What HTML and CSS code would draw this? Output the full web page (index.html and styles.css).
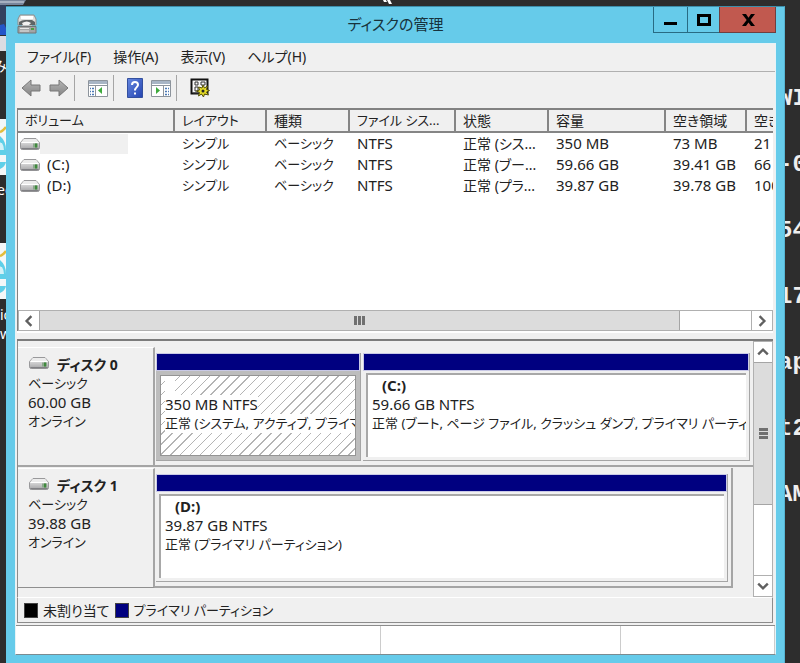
FILE: index.html
```html
<!DOCTYPE html>
<html lang="ja">
<head>
<meta charset="utf-8">
<meta name="viewport" content="width=device-width, initial-scale=1">
<title>ディスクの管理</title>
<link rel="stylesheet" href="styles.css">
</head>
<body>
<svg class="symbols" aria-hidden="true">
  <defs>
    <linearGradient id="metal" x1="0" y1="0" x2="0" y2="1"><stop offset="0" stop-color="#f4f4f4"/><stop offset="1" stop-color="#a4a4a6"/></linearGradient>
    <linearGradient id="arrow" x1="0" y1="0" x2="0" y2="1"><stop offset="0" stop-color="#b4b4b4"/><stop offset="1" stop-color="#858585"/></linearGradient>
    <linearGradient id="help" x1="0" y1="0" x2="1" y2="1"><stop offset="0" stop-color="#6688e0"/><stop offset="1" stop-color="#2444b0"/></linearGradient>
  </defs>
  <symbol id="drive" viewBox="0 0 20 12">
    <path d="M4 .5h12l3.500 4v5.300q0 1.700-2 1.700h-15q-2 0-2-1.700v-5.300z" fill="url(#metal)" stroke="#99999b"/>
    <path d="M4 1h12l3 3.500h-18z" fill="#ececec"/>
    <path d="M1.500 4.500h17" stroke="#fff"/>
    <path d="M1.500 10.700h17" stroke="#77777b"/>
    <path d="M13 5.500h5v4h-5z" fill="#8aa88a"/><path d="M15 5.500h2v4h-2z" fill="#3f8a3d"/>
  </symbol>
  <symbol id="ie" viewBox="0 0 6 56">
    <path d="M0 0h6v56H0z" fill="#f4f7f8"/>
    <path d="M0 13q3-1 6-5" fill="none" stroke="#e3bd3c" stroke-width="2.500"/>
    <path d="M0 17q6 5 6 14v5H0v-5h2q0-6-2-8zM0 43h6q-1 5-6 7z" fill="#5fcfe8"/>
    <path d="M0 24h2q2 3 2 7H0z" fill="#d4f1f7"/>
  </symbol>
</svg>

<div class="desktop">
  <div class="shortcuts">
    <svg class="pc" viewBox="0 0 26 52"><path d="M0 0h26l-3 5H0z" fill="#77859c"/><path d="M0 2h24" stroke="#d7dce4"/><path d="M0 5h6v30H0z" fill="#33415f"/><path d="M0 25l4-1 2 4v7H0z" fill="#2456c8"/><path d="M0 36h6v15H0z" fill="#dadce2"/></svg>
    <span class="caption caption-a">み</span>
    <svg class="ie ie-a"><use href="#ie"/></svg>
    <span class="caption caption-b">ee</span>
    <svg class="ie ie-b"><use href="#ie"/></svg>
    <span class="caption caption-c">ic<br>w</span>
    <svg class="pointer" viewBox="0 0 10 4"><path d="M1 0h3l1 2h-3zM5 0h3l2 4h-3z" fill="#fff"/></svg>
  </div>

  <main class="window">
    <header class="titlebar">
      <svg class="app-icon" viewBox="0 0 20 20"><path d="M3 1h14l2 4v6H1V5z" fill="#dededc" stroke="#8c8c8c"/><path d="M4 2h12v3H4z" fill="#fff"/><path d="M2 8q3-2 6-2h7l3 2v3H2z" fill="#5f6466"/><path d="M5 9q5-3 9 0l-2 2H6z" fill="#f1f1f1"/><path d="M5 11h10v2H5z" fill="#b9bcbd"/><path d="M1 12.500h18v6.500H1z" fill="#a3a5a6" stroke="#727476"/><path d="M3 14.500h9M3 17h9" stroke="#e5e5e5"/><path d="M14 14h3v2h-3z" fill="#4d9b43"/></svg>
      <h1>ディスクの管理</h1>
      <div class="controls">
        <button class="minimize" aria-label="最小化"><svg viewBox="0 0 14 12"><path d="M0 8h13v3H0z"/></svg></button>
        <button class="maximize" aria-label="最大化"><svg viewBox="0 0 14 12"><path d="M0 0h14v12H0zM3 3v6h8V3z" fill-rule="evenodd"/></svg></button>
        <button class="close" aria-label="閉じる"><svg viewBox="0 0 14 12"><path d="M1 0h4l2.500 3.700L10 0h4L9.300 6 14 12h-4L7.500 8.400 5 12H1l4.700-6z"/></svg></button>
      </div>
    </header>

    <div class="client">
      <nav class="menu">
        <button>ファイル(F)</button><button>操作(A)</button><button>表示(V)</button><button>ヘルプ(H)</button>
      </nav>
      <div class="toolbar">
        <button aria-label="戻る"><svg viewBox="0 0 20 18"><path d="M1 9l9-8v5h9v6h-9v5z" fill="url(#arrow)" stroke="#777"/></svg></button>
        <button aria-label="進む"><svg viewBox="0 0 20 18"><path d="M19 9l-9-8v5H1v6h9v5z" fill="url(#arrow)" stroke="#777"/></svg></button>
        <i class="divider"></i>
        <button class="spaced" aria-label="コンソール ツリー"><svg viewBox="0 0 20 18"><path d="M.5 1.500h19v16H.5z" fill="#fff" stroke="#8d949c"/><path d="M1 2h18v3H1z" fill="#a8b5c5"/><path d="M1 6.500h18" stroke="#8d949c"/><path d="M7.500 7v10" stroke="#8d949c"/><path d="M2 9.500h4M2 12.500h4M2 15.500h4" stroke="#4a78b5" stroke-width="1.500" stroke-dasharray="1 1 2"/><path d="M14 8v7l-4-3.500z" fill="#3eaa3c"/></svg></button>
        <i class="divider"></i>
        <button class="spaced help" aria-label="ヘルプ"><svg viewBox="0 0 16 20"><path d="M.5.5h15v19H.5z" fill="url(#help)" stroke="#34509f"/><path d="M5 7q0-3 3-3t3 3c0 2-3 2.500-3 5.500" fill="none" stroke="#fff" stroke-width="2"/><path d="M7 14.500h2v2H7z" fill="#fff"/></svg></button>
        <button aria-label="操作ウィンドウ"><svg viewBox="0 0 20 18"><path d="M.5 1.500h19v16H.5z" fill="#fff" stroke="#8d949c"/><path d="M1 2h18v3H1z" fill="#a8b5c5"/><path d="M1 6.500h18" stroke="#8d949c"/><path d="M12.500 7v10" stroke="#8d949c"/><path d="M14 9.500h4M14 12.500h4M14 15.500h4" stroke="#4a78b5" stroke-width="1.500" stroke-dasharray="2 1 1"/><path d="M5 8v7l4-3.500z" fill="#3eaa3c"/></svg></button>
        <i class="divider"></i>
        <button class="spaced" aria-label="設定"><svg viewBox="0 0 20 20"><path d="M1.500 1.500h16v14h-16z" fill="#f8f8f8" stroke="#111" stroke-width="2"/><path d="M5 4h3v3H5zM11 4h4v3h-4zM5 9h3v4H5zM3 15h9" fill="none" stroke="#333"/><path d="M13 7l1.500 3 3-2-1 3.500 3 1-3 1.500 2 3-4-1-1 3-2-3-3 2 1-3.500-3-1.500 3-1-1-3 3.500 1z" fill="#e5dc25" stroke="#55500a"/><circle cx="13" cy="13" r="1.500" fill="#222"/></svg></button>
      </div>

      <section class="volumes">
        <div class="volume-view">
        <table>
          <colgroup><col class="c-name"><col class="c-layout"><col class="c-type"><col class="c-fs"><col class="c-state"><col class="c-size"><col class="c-free"><col></colgroup>
          <thead><tr><th class="kana">ボリューム</th><th class="kana">レイアウト</th><th>種類</th><th class="kana">ファイル シス...</th><th>状態</th><th>容量</th><th>空き領域</th><th>空き領域の割合</th></tr></thead>
          <tbody>
            <tr><td><span class="name"><svg><use href="#drive"/></svg><span class="unnamed"></span></span></td><td class="kana">シンプル</td><td class="kana">ベーシック</td><td class="num">NTFS</td><td>正常 (シス...</td><td class="num">350 MB</td><td class="num">73 MB</td><td class="num">21 %</td></tr>
            <tr><td><span class="name"><svg><use href="#drive"/></svg><span class="num">(C:)</span></span></td><td class="kana">シンプル</td><td class="kana">ベーシック</td><td class="num">NTFS</td><td>正常 (ブー...</td><td class="num">59.66 GB</td><td class="num">39.41 GB</td><td class="num">66 %</td></tr>
            <tr><td><span class="name"><svg><use href="#drive"/></svg><span class="num">(D:)</span></span></td><td class="kana">シンプル</td><td class="kana">ベーシック</td><td class="num">NTFS</td><td>正常 (プラ...</td><td class="num">39.87 GB</td><td class="num">39.78 GB</td><td class="num">100 %</td></tr>
          </tbody>
        </table>
        </div>
        <div class="hscroll">
          <button aria-label="左へ"><svg viewBox="0 0 10 10"><path d="M7 1L3 5l4 4"/></svg></button>
          <div class="track"><div class="thumb"><i></i><i></i><i></i></div></div>
          <button aria-label="右へ"><svg viewBox="0 0 10 10"><path d="M3 1l4 4-4 4"/></svg></button>
        </div>
      </section>

      <div class="splitter"></div>

      <section class="disks">
        <div class="disk-list">
          <article class="disk">
            <div class="disk-label">
              <h2><svg><use href="#drive"/></svg>ディスク 0</h2>
              <p class="kana">ベーシック</p><p class="num">60.00 GB</p><p class="kana">オンライン</p>
            </div>
            <div class="partitions">
              <div class="partition system selected">
                <div class="bar"></div>
                <div class="frame"><div class="body"><p><b class="blank"></b></p><p class="num"><span>350 MB NTFS</span></p><p class="kana"><span>正常 (システム, アクティブ, プライマリ パーティション)</span></p></div></div>
              </div>
              <div class="partition">
                <div class="bar"></div>
                <div class="frame"><div class="body"><p class="letter">(C:)</p><p class="num">59.66 GB NTFS</p><p class="kana">正常 (ブート, ページ ファイル, クラッシュ ダンプ, プライマリ パーティション)</p></div></div>
              </div>
            </div>
          </article>
          <article class="disk short">
            <div class="disk-label">
              <h2><svg><use href="#drive"/></svg>ディスク 1</h2>
              <p class="kana">ベーシック</p><p class="num">39.88 GB</p><p class="kana">オンライン</p>
            </div>
            <div class="partitions">
              <div class="partition">
                <div class="bar"></div>
                <div class="frame"><div class="body"><p class="letter">(D:)</p><p class="num">39.87 GB NTFS</p><p class="kana">正常 (プライマリ パーティション)</p></div></div>
              </div>
            </div>
          </article>
        </div>
        <div class="vscroll">
          <button aria-label="上へ"><svg viewBox="0 0 10 10"><path d="M1 7l4-4 4 4"/></svg></button>
          <div class="track"><div class="thumb"><i></i><i></i><i></i></div></div>
          <button aria-label="下へ"><svg viewBox="0 0 10 10"><path d="M1 3l4 4 4-4"/></svg></button>
        </div>
      </section>

      <div class="legend"><span class="swatch free"></span><span>未割り当て</span><span class="swatch primary"></span><span class="kana">プライマリ パーティション</span></div>
      <footer class="status"><span></span><span></span><span></span></footer>
    </div>
  </main>

  <aside class="backdrop">
    <span>WI</span><span>-0</span><span>54</span><span>17</span><span>ap</span><span>t2</span><span>AM</span>
  </aside>
</div>
</body>
</html>
```
FILE: styles.css
```css
* { box-sizing: border-box; }

body {
  margin: 0;
  background: #2d2d2d;
  color: #222;
  font: 14px/19px "Noto Sans", "Noto Sans CJK JP", sans-serif;
  font-feature-settings: "palt";
}

h1, h2, p { margin: 0; font-weight: 400; }
button { padding: 0; border: 0; background: none; color: inherit; font: inherit; font-feature-settings: inherit; }
svg { display: block; }
.symbols { position: absolute; width: 0; height: 0; }
.num { font-size: 15px; }
.kana { font-size: 13px; }

/* Desktop */
.desktop {
  display: grid;
  grid-template-columns: 6px minmax(0, 1fr) 15px;
  min-height: 100vh;
}
.shortcuts { position: relative; color: #fff; }
.pc { position: absolute; left: 0; top: 0; width: 26px; height: 52px; }
.ie { position: absolute; left: 0; width: 6px; height: 56px; }
.ie-a { top: 119px; }
.ie-b { top: 243px; }
.caption { position: absolute; left: 0; white-space: nowrap; }
.caption-a { left: -7px; top: 56px; }
.caption-b { left: -3px; top: 180px; }
.caption-c { top: 305px; }
.pointer { position: absolute; left: 382px; top: 0; width: 10px; height: 4px; }

.backdrop {
  display: flex;
  flex-direction: column;
  padding-top: 66px;
  overflow: hidden;
  color: #eee;
  font: 700 24px/66px "Liberation Mono", monospace;
}
.backdrop span { margin-left: -7px; }

/* Window */
.window {
  position: relative;
  display: flex;
  flex-direction: column;
  margin-top: 6px;
  padding: 0 8px 8px 9px;
  background: #66cbea;
  border-top: 1px solid #3d8eaa;
  border-right: 1px solid #55b4d2;
}
.titlebar {
  display: grid;
  grid-template-columns: 1fr auto 1fr;
  align-items: start;
  height: 36px;
}
.app-icon { width: 20px; height: 20px; margin: 7px 2px; }
.titlebar h1 { padding-top: 8px; font-size: 15px; color: #17323c; }
.controls { display: flex; justify-content: flex-end; }
.controls button {
  display: grid;
  place-items: center;
  height: 26px;
  border: 1px solid #286b83;
  border-top: 0;
  border-right: 0;
}
.controls svg { width: 14px; height: 12px; }
.controls .minimize { width: 34px; }
.controls .maximize { width: 32px; }
.controls .close { width: 57px; background: #c1594f; border-color: #6f3f40; border-right: 1px solid #6f3f40; }

.client {
  flex: 1;
  display: flex;
  flex-direction: column;
  background: #f0f0f0;
  border: 1px solid #e6f3f7;
  border-bottom-color: #7b8b90;
}
.menu {
  display: flex;
  gap: 22px;
  height: 28px;
  padding: 0 11px 2px;
  border-bottom: 1px solid #b0b0b0;
}
.toolbar { display: flex; align-items: center; gap: 8px; height: 36px; padding: 0 5px 5px; }
.toolbar svg { width: 20px; height: 20px; }
.toolbar .help svg { width: 16px; }
.divider { width: 1px; height: 26px; margin: 0 -3px; background: #a5a5a5; }
.toolbar .spaced { margin-left: 8px; }

/* Volume list */
.volumes {
  flex: 1 0 220px;
  display: flex;
  flex-direction: column;
  margin: 0 2px 0 1px;
  background: #fff;
  border-top: 2px solid #828282;
  border-left: 1px solid #828282;
}
.volume-view { flex: 1; overflow: hidden; }
table { width: 100%; table-layout: fixed; border-collapse: separate; border-spacing: 0; }
.c-name { width: 157px; }
.c-layout { width: 92px; }
.c-type { width: 83px; }
.c-fs { width: 106px; }
.c-state { width: 93px; }
.c-size { width: 117px; }
.c-free { width: 81px; }
th, td { padding: 0 0 0 7px; overflow: hidden; white-space: nowrap; text-align: left; font-weight: 400; }
th {
  height: 23px;
  background: #f0f0f0;
  border-right: 2px solid #858585;
  border-bottom: 2px solid #858585;
}
th:last-child { border-right: 0; }
td { height: 21px; }
td:first-child { padding-left: 2px; }
.name { display: flex; align-items: center; height: 21px; }
.name svg { width: 20px; height: 12px; }
.name .num { margin-left: 7px; }
.unnamed { width: 88px; height: 20px; background: #f0f0f0; }

/* Scroll bars */
.hscroll, .vscroll { display: flex; background: #fff; border: 1px solid #b0b0b0; }
.hscroll { height: 21px; }
.vscroll { flex: none; flex-direction: column; width: 20px; }
.hscroll button, .vscroll button { display: grid; place-items: center; flex: none; }
.hscroll button { width: 20px; }
.vscroll button { height: 20px; }
.hscroll button svg, .vscroll button svg { width: 12px; height: 12px; fill: none; stroke: #606060; stroke-width: 2; }
.track { flex: 1; display: flex; }
.thumb { display: flex; align-items: center; justify-content: center; gap: 1px; background: #dcdcdc; }
.hscroll .track { border-right: 1px solid #b0b0b0; }
.hscroll .thumb { width: 90%; border: 1px solid #a5a5a5; border-width: 0 1px; }
.hscroll i { width: 3px; height: 9px; background: #707070; }
.vscroll .track { flex-direction: column; border-bottom: 1px solid #b0b0b0; }
.vscroll .thumb { flex-direction: column; height: 67%; border: 1px solid #a5a5a5; border-width: 1px 0; }
.vscroll i { width: 9px; height: 3px; background: #707070; }

.splitter { height: 10px; margin: 0 2px 0 1px; border-top: 2px solid #fff; border-bottom: 2px solid #7c7c7c; }

/* Disk map */
.disks { display: flex; margin: 0 2px 0 1px; border-left: 1px solid #8c8c8c; }
.disk-list { flex: 1; min-width: 0; display: grid; grid-template-columns: minmax(0, 1fr); gap: 1px; padding: 6px 0 9px; }
.disk { display: flex; height: 120px; border-bottom: 2px solid #a5a5a5; }
.disk.short { border-bottom: 0; }
.disk-label {
  flex: none;
  width: 137px;
  padding: 7px 0 0 10px;
  border-top: 1px solid #fff;
  border-right: 2px solid #a5a5a5;
}
.disk.short .disk-label { border-bottom: 1px solid #8f8f8f; }
.disk-label h2 { display: flex; gap: 8px; font-size: 14px; font-weight: 700; }
.disk-label svg { width: 20px; height: 12px; margin: 2px 0 0 1px; }
.partitions { flex: 1; min-width: 0; display: flex; gap: 2px; padding: 6px 3px 4px 1px; }
.disk.short .partitions { flex: none; width: 578px; border-right: 2px solid #a5a5a5; border-bottom: 2px solid #a5a5a5; }
.partition { flex: 1; min-width: 0; display: flex; flex-direction: column; border: 1px solid #a5a5a5; border-width: 0 1px 1px 0; }
.partition.system { flex: none; width: 205px; }
.bar { height: 18px; background: #000080; border: 1px solid #c9c9e6; }
.frame { flex: 1; min-height: 0; display: flex; padding: 2px 3px 3px; }
.body { flex: 1; min-width: 0; padding: 1px 4px; overflow: hidden; white-space: nowrap; background: #fff; border: 2px solid #a8a8a8; border-width: 2px 0 0 2px; }
.body p { height: 19px; }
.body .letter { padding-left: 10px; font-size: 15px; font-weight: 700; }
.selected .frame { background: #bdbdbd; padding: 4px; }
.selected .body {
  padding: 0 0 0 4px;
  border: 1px solid #949494;
  background: repeating-linear-gradient(135deg, #fff 0 6px, #b4b4b4 6px 7px);
}
.selected span { display: inline-block; background: #fff; }
.blank { display: block; width: 10px; height: 19px; background: #fff; }

.legend {
  display: flex;
  align-items: center;
  gap: 5px;
  height: 26px;
  margin: 0 2px 0 1px;
  padding-left: 6px;
  border: 1px solid #8c8c8c;
  border-top-color: #fff;
}
.swatch { width: 14px; height: 15px; border: 1px solid #444; }
.free { background: #000; }
.primary { background: #000080; }
.status { display: flex; height: 29px; margin-top: 2px; background: #fff; border-top: 1px solid #8c8c8c; }
.status span { width: 240px; border-right: 1px solid #ccc; }
.status span:first-child { flex: 1; }
.status span:last-child { width: 154px; }
```
